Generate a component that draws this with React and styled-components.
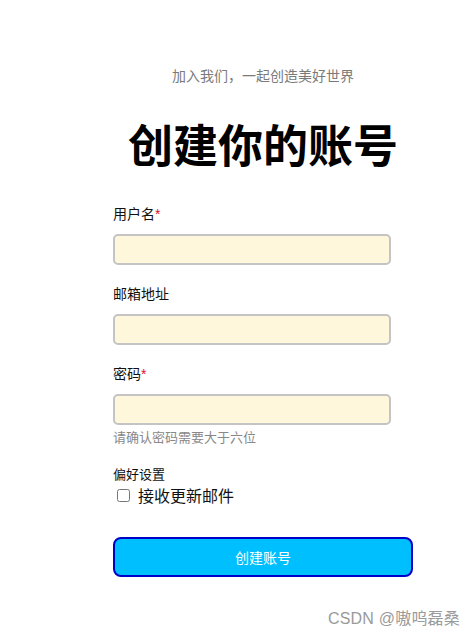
import React from 'react';
import styled, { createGlobalStyle } from 'styled-components';

const GlobalStyle = createGlobalStyle`
  html, body {
    margin: 0;
    padding: 0;
    background: #ffffff;
  }
  body {
    font-family: "Liberation Sans", "Noto Sans CJK SC", sans-serif;
  }
`;

const Page = styled.main`
  position: relative;
  width: 475px;
  height: 641px;
  overflow: hidden;
  padding-top: 66px;
  box-sizing: border-box;
`;

const Form = styled.form`
  width: 300px;
  margin-left: 113px;
  display: flex;
  flex-direction: column;
`;

const Subtitle = styled.p`
  margin: 0;
  text-align: center;
  font-size: 14px;
  line-height: 20px;
  color: #7a7a7a;
`;

const Title = styled.h1`
  margin: 37px 0 0;
  text-align: center;
  font-size: 45px;
  line-height: 50px;
  font-weight: 700;
  color: #000;
  white-space: nowrap;
`;

const Field = styled.div`
  display: flex;
  flex-direction: column;
  margin-top: ${p => p.first ? '31px' : '19px'};
`;

const Label = styled.label`
  font-size: 14px;
  line-height: 20px;
  color: #111;
  margin-bottom: 10px;
`;

const Required = styled.span`
  color: #e0102a;
`;

const Input = styled.input`
  width: 278px;
  height: 31px;
  box-sizing: border-box;
  background: #fff7dc;
  border: 2px solid #c4c4c4;
  border-radius: 5px;
  outline: none;
  padding: 0 8px;
  font-size: 14px;
`;

const Hint = styled.span`
  margin-top: 4px;
  font-size: 13px;
  line-height: 18px;
  color: #888;
`;

const Fieldset = styled.div`
  margin-top: 19px;
  display: flex;
  flex-direction: column;
`;

const Legend = styled.span`
  font-size: 13px;
  line-height: 18px;
  color: #111;
`;

const CheckRow = styled.label`
  display: flex;
  align-items: center;
  height: 22px;
  font-size: 16px;
  color: #111;
  input {
    width: 13px;
    height: 13px;
    margin: 0 8px 0 4px;
  }
`;

const SubmitButton = styled.button`
  margin-top: 31px;
  width: 300px;
  height: 40px;
  background: #00bfff;
  border: 2px solid #0000c8;
  border-radius: 8px;
  color: #ffffff;
  font-family: inherit;
  font-size: 14px;
  cursor: pointer;
`;

const Watermark = styled.span`
  position: absolute;
  right: 15px;
  bottom: 12px;
  font-size: 16px;
  color: #9a9a9a;
  letter-spacing: 0.2px;
`;

const App = () => {
  return (
    <>
      <GlobalStyle />
      <Page>
        <Form onSubmit={e => e.preventDefault()}>
          <Subtitle>加入我们，一起创造美好世界</Subtitle>
          <Title>创建你的账号</Title>

          <Field first>
            <Label>用户名<Required>*</Required></Label>
            <Input type="text" />
          </Field>

          <Field>
            <Label>邮箱地址</Label>
            <Input type="email" />
          </Field>

          <Field>
            <Label>密码<Required>*</Required></Label>
            <Input type="password" />
            <Hint>请确认密码需要大于六位</Hint>
          </Field>

          <Fieldset>
            <Legend>偏好设置</Legend>
            <CheckRow>
              <input type="checkbox" />
              接收更新邮件
            </CheckRow>
          </Fieldset>

          <SubmitButton type="submit">创建账号</SubmitButton>
        </Form>
        <Watermark>CSDN @嗷呜磊桑</Watermark>
      </Page>
    </>
  );
};

export default App;
